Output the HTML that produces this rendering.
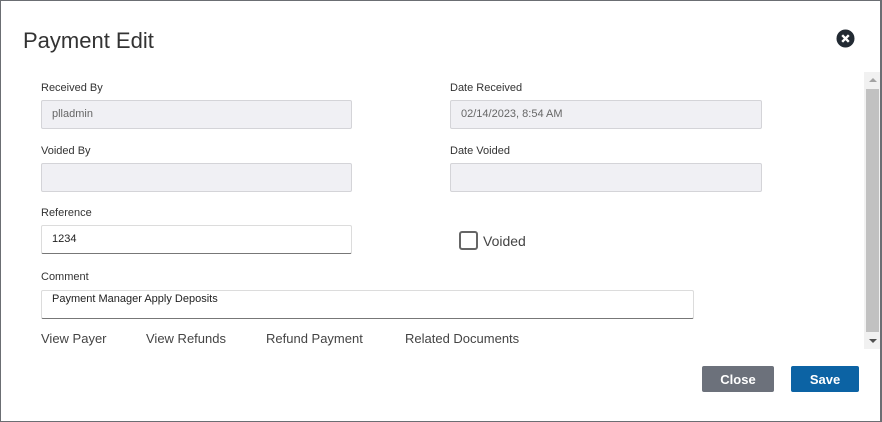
<!DOCTYPE html>
<html><head><style>
*{margin:0;padding:0;box-sizing:border-box}
body{width:882px;height:422px;background:#fff;font-family:"Liberation Sans",sans-serif;position:relative;overflow:hidden;color:#333}
.frame{position:absolute;left:0;top:0;width:882px;height:422px;border:1px solid #6b6e73;border-right-width:2px}
.a{position:absolute;white-space:nowrap}
.lbl{font-size:11px;color:#333}
.in{position:absolute;height:29px;background:#f0f0f4;border:1px solid #d4d4d8;border-radius:2px;font-size:11px;color:#666;padding:7px 0 0 10px}
.w{background:#fff;border:1px solid #dcdcdc;border-bottom:1px solid #777;color:#222}
.lnk{font-size:13px;color:#444}
.btn{position:absolute;top:366px;height:26px;border-radius:2px;color:#fff;font-weight:bold;font-size:13px;text-align:center;line-height:27px}
</style></head><body>
<div class="frame"></div>
<div class="a" style="left:23px;top:28px;font-size:22px;color:#333">Payment Edit</div>
<svg class="a" style="left:836px;top:29px" width="19" height="19" viewBox="0 0 19 19"><circle cx="9.5" cy="9.5" r="9" fill="#222a33"/><path d="M6.2 6.2L12.8 12.8M12.8 6.2L6.2 12.8" stroke="#fff" stroke-width="2.4"/></svg>

<div class="a lbl" style="left:41px;top:82px">Received By</div>
<div class="in" style="left:41px;top:100px;width:311px">plladmin</div>
<div class="a lbl" style="left:450px;top:82px">Date Received</div>
<div class="in" style="left:450px;top:100px;width:312px">02/14/2023, 8:54 AM</div>

<div class="a lbl" style="left:41px;top:145px">Voided By</div>
<div class="in" style="left:41px;top:163px;width:311px"></div>
<div class="a lbl" style="left:450px;top:145px">Date Voided</div>
<div class="in" style="left:450px;top:163px;width:312px"></div>

<div class="a lbl" style="left:41px;top:207px">Reference</div>
<div class="in w" style="left:41px;top:225px;width:311px">1234</div>
<div class="a" style="left:459px;top:231px;width:19px;height:19px;border:2px solid #666;border-radius:3px"></div>
<div class="a" style="left:483px;top:233px;font-size:14px;color:#444">Voided</div>

<div class="a lbl" style="left:41px;top:271px">Comment</div>
<div class="in w" style="left:41px;top:290px;width:653px;padding-top:2px">Payment Manager Apply Deposits</div>

<div class="a lnk" style="left:41px;top:331px">View Payer</div>
<div class="a lnk" style="left:146px;top:331px">View Refunds</div>
<div class="a lnk" style="left:266px;top:331px">Refund Payment</div>
<div class="a lnk" style="left:405px;top:331px">Related Documents</div>

<div class="a" style="left:864px;top:72px;width:16px;height:277px;background:#f1f1f1"></div>
<div class="a" style="left:866px;top:89px;width:13px;height:243px;background:#c1c1c1"></div>
<div class="a" style="left:869px;top:78px;width:0;height:0;border-left:4px solid transparent;border-right:4px solid transparent;border-bottom:4px solid #a3a3a3"></div>
<div class="a" style="left:869px;top:339px;width:0;height:0;border-left:4px solid transparent;border-right:4px solid transparent;border-top:4px solid #505050"></div>

<div class="btn" style="left:702px;width:72px;background:#6c717b">Close</div>
<div class="btn" style="left:791px;width:68px;background:#0c63a4">Save</div>
</body></html>
